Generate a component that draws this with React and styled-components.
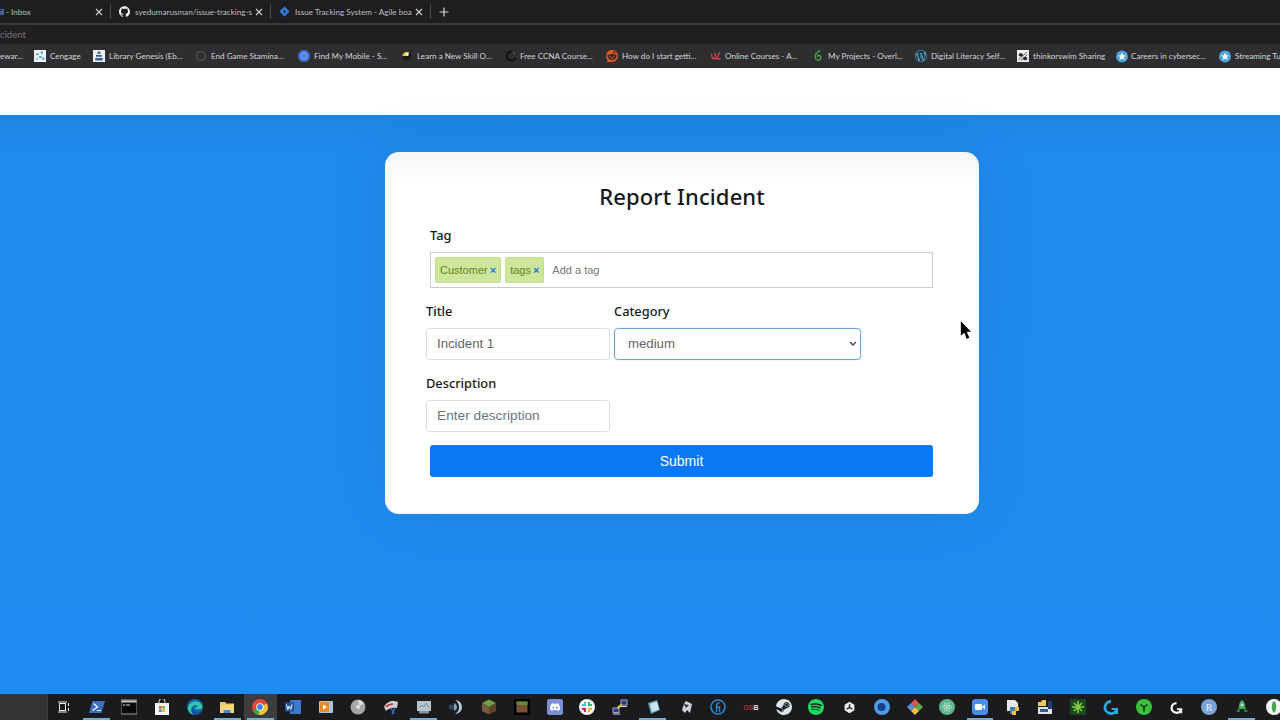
import React from "react";
import styled, { createGlobalStyle } from "styled-components";
import {
  SiGithub, SiReddit, SiWordpress, SiDiscord, SiSteam, SiSpotify, SiReact,
} from "react-icons/si";

const Global = createGlobalStyle`
  html, body { margin: 0; padding: 0; width: 1280px; height: 720px; overflow: hidden; background: #fff; }
  * { box-sizing: border-box; }
`;

const Page = styled.div`
  width: 1280px; height: 720px; display: flex; flex-direction: column; overflow: hidden;
  font-family: "Liberation Sans", Arial, sans-serif;
`;

/* browser chrome */
const TabStrip = styled.div`
  height: 23px; background: #1e1e20; display: flex; align-items: center; color: #bdbdbf;
  font: 8.1px Lato, "Open Sans", sans-serif; flex: none;
`;
const Tab = styled.div`
  width: ${p => p.$w}px; height: 15px; display: flex; align-items: center; gap: 5px; flex: none;
  padding-left: ${p => p.$pad}px; padding-right: 7px; border-right: 1px solid #4a4a4c;
  white-space: nowrap;
`;
const TabTitle = styled.span`
  flex: 1; white-space: nowrap; min-width: 0;
`;
const TabClose = styled.span`
  width: 8px; height: 8px; flex: none; display: block; color: #d0d0d2;
`;
const NewTab = styled.span`
  width: 10px; height: 10px; margin-left: 8px; color: #d6d6d8; display: block;
`;
const TopRule = styled.div`
  height: 2px; background: #39393b; flex: none;
`;
const AddressBar = styled.div`
  height: 19px; background: #1f1f21; color: #77777a; display: flex; align-items: center;
  font: 9.5px Lato, "Open Sans", sans-serif; flex: none;
`;
const Bookmarks = styled.div`
  height: 24px; background: #2e2e30; display: flex; align-items: center; color: #d4d4d6;
  font: 8.1px Lato, "Open Sans", sans-serif; flex: none; overflow: hidden;
`;
const BookmarkItem = styled.div`
  width: ${p => p.$w}px; display: flex; align-items: center; gap: ${p => p.$g || 4}px; flex: none; white-space: nowrap;
`;
const BookmarkLead = styled.div`
  width: 34px; flex: none;
`;
const Glyph = styled.span`
  width: 12px; height: 12px; flex: none; display: flex; align-items: center; justify-content: center;
`;

const WhiteBand = styled.div`
  height: 47px; background: #fff; flex: none;
`;

const Stage = styled.main`
  flex: 1; min-height: 0; padding-top: 37px; padding-left: 385px;
  background: linear-gradient(#1f85e4 0, #1f8bee 40px, #1f8cf1 100%);
`;

const Card = styled.section`
  position: relative; width: 594px; height: 362px; border-radius: 14px;
  background: linear-gradient(#f6f6f6 0, #ffffff 34px);
  box-shadow: 0 0 60px rgba(20, 60, 110, 0.13);
  padding: 28px 0 0 41px;
`;
const Heading = styled.h1`
  margin: 0 0 0 -41px; width: 594px; text-align: center; letter-spacing: .12px;
  font: 500 22px/32px "Noto Sans", "Open Sans", sans-serif; color: #16181b;
`;
const Label = styled.label`
  display: block; font: 500 12.8px/18px "Noto Sans", "Open Sans", sans-serif; color: #16181b;
`;
const TagGroup = styled.div`
  margin: 14px 0 0 4px; width: 503px;
`;
const TagBox = styled.div`
  margin-top: 8px; height: 36px; border: 1px solid #cccccc; background: #fff;
  display: flex; align-items: center; padding-left: 4px; gap: 4px;
`;
const Tag = styled.span`
  height: 26px; padding: 0 4px; display: inline-flex; align-items: center; gap: 2px;
  background: #cde69c; border: 1px solid #c4e08c; border-radius: 2px; color: #638421; font-size: 11px;
`;
const TagRemove = styled.span`
  color: #1a78d8; font-weight: 700; font-size: 11px;
`;
const TagInput = styled.input`
  border: 0; outline: 0; margin-left: 4px; padding: 0; font: 11px "Liberation Sans", Arial, sans-serif;
  background: transparent; width: 120px;
  &::placeholder { color: #777; opacity: 1; }
`;
const FieldRow = styled.div`
  margin-top: ${p => p.$top}px; display: flex; gap: 4px;
`;
const Field = styled.div`
  width: ${p => p.$w}px;
`;
const TextInput = styled.input`
  margin-top: 8px; width: 100%; height: 32px; display: block; padding: 0 10px 2px;
  border: 1px solid #dcdfe2; border-radius: 4px; outline: 0; background: #fff; color: #5f656c;
  font: 13.2px "Liberation Sans", Arial, sans-serif;
  &::placeholder { color: #6c757d; opacity: 1; font-size: 13.7px; }
`;
const SelectWrap = styled.div`
  position: relative; margin-top: 8px; height: 32px;
`;
const SelectInput = styled.select`
  width: 100%; height: 32px; display: block; padding: 0 13px 1px; appearance: none;
  border: 1px solid #6ea4dc; border-radius: 4px; outline: 0; background: #fff; color: #5f656c;
  box-shadow: 0 0 0 1px rgba(128,189,255,.12);
  font: 13.2px "Liberation Sans", Arial, sans-serif;
`;
const Chevron = styled.svg`
  position: absolute; right: 4px; top: 13px; width: 8px; height: 6px; pointer-events: none;
`;
const SubmitButton = styled.button`
  display: block; margin: 13px 0 0 4px; width: 503px; height: 32px; border: 0; border-radius: 3px;
  background: #0a78f5; color: #fff; font: 14px "Liberation Sans", Arial, sans-serif;
`;
const Pointer = styled.svg`
  position: absolute; left: 575px; top: 169px; width: 11px; height: 20px;
`;

/* taskbar */
const Taskbar = styled.footer`
  height: 26px; background: #1b1b1d; display: flex; flex: none; align-items: stretch; overflow: hidden;
`;
const TaskSearch = styled.div`
  width: 47.5px; flex: none; background: #333335; border-right: 1px solid #3d3d3f;
`;
const TaskItem = styled.div`
  width: 32.72px; flex: none; position: relative; display: flex; align-items: center; justify-content: center;
  background: ${p => p.$active ? "#3d3d3f" : "transparent"};
  &::after {
    content: ""; position: absolute; left: 3px; right: 3px; bottom: 0; height: 2px;
    background: ${p => p.$on ? "#78a9cf" : "transparent"};
  }
`;
const TaskText = styled.span`
  font: 700 7px "Liberation Sans", Arial, sans-serif; color: ${p => p.$c}; letter-spacing: 0;
`;
const RBadge = styled.span`
  width: 16px; height: 16px; border-radius: 50%; background: #7aa3d6; color: #eef3fa;
  font: 10px "Liberation Serif", serif; display: flex; align-items: center; justify-content: center;
`;

const S = ({ children, size = 16, v = "0 0 16 16" }) => (
  <svg width={size} height={size} viewBox={v}>{children}</svg>
);

const Close = () => (
  <TabClose><svg width="8" height="8" viewBox="0 0 8 8"><path d="M1 1l6 6M7 1L1 7" stroke="currentColor" strokeWidth="1.1" /></svg></TabClose>
);

const JiraMark = ({ size = 11 }) => (
  <svg width={size} height={size} viewBox="0 0 12 12">
    <path d="M6 .5L11.500 6 6 11.500.5 6z" fill="#2f7fe8" />
    <path d="M6 4.200L7.800 6 6 7.800 4.200 6z" fill="#1e1e20" />
  </svg>
);

const Star = () => (
  <S size={13}>
    <circle cx="8" cy="8" r="8" fill="#4da3dc" />
    <path d="M8 2.800l1.600 3.400 3.600.4-2.700 2.400.8 3.600L8 10.800l-3.300 1.800.8-3.600L2.800 6.600l3.600-.4z" fill="#fff" />
  </S>
);

const LogiG = ({ c, size }) => (
  <S size={size}>
    <path d="M8 2.500a6 6 0 1 0 5.800 7.500" fill="none" stroke={c} strokeWidth="2.800" />
    <path d="M8.500 9h6.500v6h-3V11H8.500z" fill={c} />
  </S>
);

const bookmarks = [
  { w: 59, t: "Cengage", i: <S size={12}><rect width="16" height="16" fill="#f2f6fa" /><path d="M3 4h3v3H3zM9 2h3v3H9zM7 8h3v3H7zM11 10h3v3h-3zM3 11h2v2H3z" fill="#4f9fd0" /></S> },
  { w: 102, t: "Library Genesis (Eb...", i: <S size={12}><rect width="16" height="16" fill="#f4f4f6" /><path d="M6.500 2h3l1 3h-5zM4 6.500h8V9H4zM3 10.500h10V14H3z" fill="#2b5c9e" /></S> },
  { w: 103, t: "End Game Stamina...", i: <S size={12}><circle cx="8" cy="8" r="6" fill="none" stroke="#5c5c5e" strokeWidth="2" strokeDasharray="2 1" /></S> },
  { w: 103, t: "Find My Mobile - S...", i: <S size={12}><circle cx="8" cy="8" r="8" fill="#4b70e0" /><rect x="5" y="4.500" width="6" height="7" rx="1" fill="none" stroke="#a9c0f5" /></S> },
  { w: 104, t: "Learn a New Skill O...", i: <S size={12}><circle cx="8" cy="8" r="6" fill="#1b1b1b" /><path d="M2 8a6 6 0 0 1 9-5L8 8z" fill="#edc84a" /><circle cx="8.500" cy="6" r="1.800" fill="#fff" /></S> },
  { w: 101, t: "Free CCNA Course...", g: 3, i: <S size={12}><path d="M9 2a6 6 0 1 0 5 8" fill="none" stroke="#151517" strokeWidth="3" /><path d="M11 3l2 2" stroke="#bbb" /></S> },
  { w: 104, t: "How do I start getti...", i: <SiReddit size={12} color="#e4532a" /> },
  { w: 102, t: "Online Courses - A...", g: 3, i: <S size={12}><path d="M2 5c0 6 3 9 5 5V4M7 10c1 3 3 2 3-1l3-6M10 9c0 4 2 4 4 2" fill="none" stroke="#d4434e" strokeWidth="1.800" /></S> },
  { w: 103, t: "My Projects - Overl...", i: <S size={12}><path d="M11 1C5 3 3 7 5 12c3 3 7 1 7-2s-4-4-5-1" fill="none" stroke="#4a9a4a" strokeWidth="2" /></S> },
  { w: 102, t: "Digital Literacy Self...", i: <SiWordpress size={12} color="#4a9fce" /> },
  { w: 99, t: "thinkorswim Sharing", i: <S size={12}><rect width="16" height="16" fill="#efefef" /><path d="M2 13L13 3M5 14l9-8M3 5h4v3H3zM9 10h4v3H9z" stroke="#222" fill="#222" /></S> },
  { w: 103, t: "Careers in cybersec...", g: 3, i: <Star /> },
  { w: 61, t: "Streaming Tu", i: <Star /> },
];

const Svg = S;
const taskIcons = [
  { i: <Svg size={14} v="0 0 14 14"><rect x="2.500" y="3.500" width="6" height="7" fill="none" stroke="#e8e8e8" /><path d="M1 2h9M1 12h9M11.500 3v3M11.500 8v3" stroke="#e8e8e8" /></Svg> },
  { on: 1, i: <Svg><path d="M3.500 2H16l-3.500 12H0z" fill="#3a6fc4" /><path d="M4.500 4.500L8.500 8 3.500 11.500M8 11.500h4" stroke="#fff" strokeWidth="1.200" fill="none" /></Svg> },
  { i: <Svg><rect y="1" width="16" height="14" fill="#0b0b0b" stroke="#9a9a9a" /><rect x=".5" y="1.500" width="15" height="2" fill="#c9c9c9" /><path d="M2 6h2M5 6h4" stroke="#ddd" /></Svg> },
  { i: <Svg><rect x="1" y="4" width="14" height="12" fill="#f6f6f6" /><path d="M5 5V2.500a3 3 0 0 1 6 0V5" fill="none" stroke="#ddd" /><rect x="5" y="7" width="2.700" height="2.700" fill="#e8562a" /><rect x="8.300" y="7" width="2.700" height="2.700" fill="#7cb83a" /><rect x="5" y="10.300" width="2.700" height="2.700" fill="#2e9be0" /><rect x="8.300" y="10.300" width="2.700" height="2.700" fill="#f4b81f" /></Svg> },
  { i: <Svg><circle cx="8" cy="8" r="8" fill="#0f6fb3" /><path d="M1 9C2 3 9 1 13 4c3 2 3 6 0 6H8c0-2 3-2 3-3-2-2-7-1-7 5 0 2 2 4 4 4-4 0-7-3-7-7z" fill="#37c9a0" /><path d="M6 9c0 3 4 6 9 2-1 3-4 5-7 5-3 0-4-4-2-7z" fill="#0e4f9e" /></Svg> },
  { on: 1, i: <Svg><path d="M1 3h5l1.500 1.500H15V14H1z" fill="#efc75e" /><rect x="1" y="6" width="14" height="8" fill="#f5d67f" /><rect x="4.500" y="11" width="7" height="3" fill="#3f8fcf" /></Svg> },
  { on: 1, active: 1, i: <Svg><circle cx="8" cy="8" r="8" fill="#e0483a" /><path d="M8 8L1 12a8 8 0 0 0 8 4z" fill="#3da64f" /><path d="M8 8l-1 8a8 8 0 0 0 8-11.500z" fill="#f6c72c" /><circle cx="8" cy="8" r="3.800" fill="#fff" /><circle cx="8" cy="8" r="2.900" fill="#4482ee" /></Svg> },
  { i: <Svg><rect x="5" y="1" width="11" height="14" fill="#3f78c8" /><rect x="0" y="3.500" width="9" height="9" fill="#1d55a4" /><path d="M1.500 5.500l1.200 5 1.500-3.500 1.500 3.500 1.300-5" stroke="#fff" fill="none" /></Svg> },
  { i: <Svg><rect x="1" y="2" width="14" height="12" rx="1" fill="#a7c5dc" /><rect x="2" y="3" width="9" height="10" fill="#e78a2f" /><path d="M5 5.500l4 2.500-4 2.500z" fill="#fff" /></Svg> },
  { i: <Svg><circle cx="8" cy="8" r="7.500" fill="#a5a5a7" /><circle cx="8" cy="8" r="2" fill="#e2e2e2" /><path d="M8 1a7 7 0 0 1 6 4L9 7z" fill="#d8d8d8" /></Svg> },
  { i: <Svg><path d="M1 8c3-6 9-7 14-5l-1 6C9 8 5 10 3 12z" fill="#cfd0d4" /><path d="M3 8c2-2 5-3 7-3" stroke="#c9303c" strokeWidth="1.600" fill="none" /><path d="M8 9l3 6M12 9l-3 6" stroke="#3a6ec8" strokeWidth="1.400" /></Svg> },
  { on: 1, i: <Svg><rect x="1" y="2" width="14" height="10" fill="#b9c3c9" /><path d="M3 9l3-3 2 2 2-4 3 5" stroke="#6f94ad" fill="none" /><rect x="3" y="12" width="10" height="2.500" fill="#8d9499" /></Svg> },
  { i: <Svg><path d="M7 1a7 7 0 0 1 0 14c3-2 4-4 4-7s-1-5-4-7z" fill="#b9c8d6" /><path d="M6 4c2 1 3 2 3 4s-1 3-3 4z" fill="#7ea2c0" /><circle cx="3.500" cy="8" r="2.500" fill="#2e4a66" /></Svg> },
  { i: <Svg><path d="M8 .5L15 4 8 8 1 4z" fill="#6fa14a" /><path d="M1 4l7 4v7.500L1 12z" fill="#7a5a3c" /><path d="M15 4L8 8v7.500l7-3.500z" fill="#5f442c" /></Svg> },
  { i: <Svg><rect width="16" height="16" fill="#000" /><rect x="2.500" y="2.500" width="11" height="11" fill="#7a5230" /><rect x="2.500" y="2.500" width="11" height="3.500" fill="#5d8f37" /></Svg> },
  { i: <Svg><rect width="16" height="16" rx="2" fill="#7b8fd6" /><g transform="translate(3 3) scale(.42)"><SiDiscord size={24} color="#fff" /></g></Svg> },
  { i: <Svg><circle cx="8" cy="8" r="8" fill="#f4f4f4" /><path d="M6 3v4M3 6h3" stroke="#36c5f0" strokeWidth="2" /><path d="M10 3v4M10 6h3" stroke="#2eb67d" strokeWidth="2" /><path d="M6 9v4M3 10h3" stroke="#e01e5a" strokeWidth="2" /><path d="M10 9v4M10 10h3" stroke="#ecb22e" strokeWidth="2" /></Svg> },
  { i: <Svg><rect x="9" y="1" width="6" height="5" fill="#2b3f8f" stroke="#b9c4e6" strokeWidth=".8" /><rect x="1" y="9" width="6" height="4.500" fill="#2b3f8f" stroke="#b9c4e6" strokeWidth=".8" /><path d="M1 15h7M9 7.500h6" stroke="#ddd" /><path d="M5 8l4-3 1 2-4 3z" fill="#e8d23a" /></Svg> },
  { on: 1, i: <Svg><path d="M3 4L12 1l3 10-9 4z" fill="#5aa6b8" /><path d="M5 5l7-2.500 2 8-7 2.500z" fill="#cfe6ea" /></Svg> },
  { i: <Svg><path d="M8 2l6 3-2 9-3-3-2 3-3-3 2-6z" fill="#cfd4d8" /><path d="M6 5l5 1-3 3z" fill="#2b2f33" /></Svg> },
  { i: <Svg><circle cx="8" cy="8" r="7" fill="none" stroke="#2f86c9" strokeWidth="1.600" /><path d="M6.500 13V7c0-2 1.500-3 3-3M6.500 8h3v5" stroke="#2f86c9" strokeWidth="1.400" fill="none" /></Svg> },
  { i: <TaskText $c="#a8343c">OS<TaskText $c="#e0e0e0">B</TaskText></TaskText> },
  { i: <SiSteam size={16} color="#d9e4ee" /> },
  { i: <SiSpotify size={16} color="#1ed760" /> },
  { i: <Svg size={13}><path d="M8 1l6 3.500v7L8 15l-6-3.500v-7z" fill="#eeeeee" /><path d="M8 8V4M8 8l-3.500 2M8 8l3.500 2" stroke="#1b1b1d" strokeWidth="1.600" /></Svg> },
  { i: <Svg><circle cx="8" cy="8" r="8" fill="#4c9ee8" /><circle cx="7.500" cy="8" r="4" fill="#1c3f8a" /></Svg> },
  { i: <Svg><path d="M8 0l4 4-4 4-4-4z" fill="#d8574a" /><path d="M12 4l4 4-4 4-4-4z" fill="#5ba84a" /><path d="M4 4l4 4-4 4-4-4z" fill="#5c8fd6" /><path d="M8 8l4 4-4 4-4-4z" fill="#e8c048" /></Svg> },
  { i: <Svg><circle cx="8" cy="8" r="8" fill="#5fb58a" /><g transform="translate(3 3) scale(.42)"><SiReact size={24} color="#c9ecd9" /></g></Svg> },
  { on: 1, i: <Svg><rect width="16" height="16" rx="3.500" fill="#4a8cf0" /><rect x="3" y="5" width="7" height="6" rx="1.200" fill="#fff" /><path d="M10.500 7.500L13 5.500v5l-2.500-2z" fill="#fff" /></Svg> },
  { i: <Svg><path d="M2 1h8l3 3v8H2z" fill="#e8e8ea" /><path d="M5 8h5v4H7v3H5z" fill="#4a7eb5" /><path d="M10 8h4v4h-3v4H7v-4h3z" fill="#e8c042" /></Svg> },
  { i: <Svg><path d="M1 3h3l1-2h4v6H1z" fill="#ecc85a" /><rect x="1" y="8" width="14" height="7" fill="#dfe4ea" /><rect x="11" y="2" width="4" height="8" fill="#1f3f75" /><rect x="3" y="10" width="8" height="3" fill="#2f5a96" /></Svg> },
  { i: <Svg><rect width="16" height="16" fill="#184a1e" /><path d="M8 2v12M2 8h12M4 4l8 8M12 4l-8 8" stroke="#88cc44" strokeWidth="1.600" /></Svg> },
  { i: <LogiG c="#2aa9e0" size={16} /> },
  { i: <Svg><circle cx="8" cy="8" r="8" fill="#37c23a" /><path d="M8 8V12.500M8 8L4.500 5.500M8 8l3.500-2.500" stroke="#10300f" strokeWidth="1.500" /></Svg> },
  { i: <LogiG c="#f2f2f2" size={13} /> },
  { i: <RBadge>R</RBadge> },
  { on: 1, i: <Svg><path d="M8 1c3 2 3.500 6 3 9H5C4.500 7 5 3 8 1z" fill="#4aa860" /><path d="M5 8L2 13h4zM11 8l3 5h-4z" fill="#2f7d42" /><circle cx="8" cy="6" r="1.400" fill="#bfe8c8" /></Svg> },
  { i: <Svg><circle cx="8" cy="8" r="8" fill="#f6f6f6" /><path d="M8 2c3 2 3 9 0 12-3-3-3-10 0-12z" fill="#3fa652" /></Svg> },
];

export default function App() {
  return (
    <Page>
      <Global />
      <TabStrip>
        <Tab $w={111} $pad={0}><TabTitle>il - Inbox</TabTitle><Close /></Tab>
        <Tab $w={160} $pad={7}>
          <Glyph><SiGithub size={11} color="#f2f2f2" /></Glyph>
          <TabTitle>syedumarusman/issue-tracking-s</TabTitle><Close />
        </Tab>
        <Tab $w={160} $pad={7}>
          <Glyph><JiraMark /></Glyph>
          <TabTitle>Issue Tracking System - Agile boa</TabTitle><Close />
        </Tab>
        <NewTab><svg width="10" height="10" viewBox="0 0 10 10"><path d="M5 .5v9M.5 5h9" stroke="currentColor" strokeWidth="1.200" /></svg></NewTab>
      </TabStrip>
      <TopRule />
      <AddressBar>cident</AddressBar>
      <Bookmarks>
        <BookmarkLead>ewar...</BookmarkLead>
        {bookmarks.map(b => (
          <BookmarkItem key={b.t} $w={b.w} $g={b.g}>
            <Glyph>{b.i}</Glyph>
            <span>{b.t}</span>
          </BookmarkItem>
        ))}
      </Bookmarks>
      <WhiteBand />
      <Stage>
        <Card>
          <Heading>Report Incident</Heading>
          <TagGroup>
            <Label>Tag</Label>
            <TagBox>
              <Tag>Customer <TagRemove>×</TagRemove></Tag>
              <Tag>tags <TagRemove>×</TagRemove></Tag>
              <TagInput placeholder="Add a tag" readOnly />
            </TagBox>
          </TagGroup>
          <FieldRow $top={14}>
            <Field $w={184}>
              <Label>Title</Label>
              <TextInput defaultValue="Incident 1" />
            </Field>
            <Field $w={247}>
              <Label>Category</Label>
              <SelectWrap>
                <SelectInput defaultValue="medium">
                  <option>low</option>
                  <option>medium</option>
                  <option>high</option>
                </SelectInput>
                <Chevron viewBox="0 0 8 6"><path d="M1 1l3 3 3-3" fill="none" stroke="#444" strokeWidth="1.300" /></Chevron>
              </SelectWrap>
            </Field>
          </FieldRow>
          <FieldRow $top={14}>
            <Field $w={184}>
              <Label>Description</Label>
              <TextInput placeholder="Enter description" />
            </Field>
          </FieldRow>
          <SubmitButton>Submit</SubmitButton>
          <Pointer viewBox="0 0 13 23">
            <path d="M1 0v17l4-3.500L8 21l3-1.500-3-7h5z" fill="#000" />
          </Pointer>
        </Card>
      </Stage>
      <Taskbar>
        <TaskSearch />
        {taskIcons.map((t, n) => (
          <TaskItem key={n} $on={t.on} $active={t.active}>{t.i}</TaskItem>
        ))}
      </Taskbar>
    </Page>
  );
}
